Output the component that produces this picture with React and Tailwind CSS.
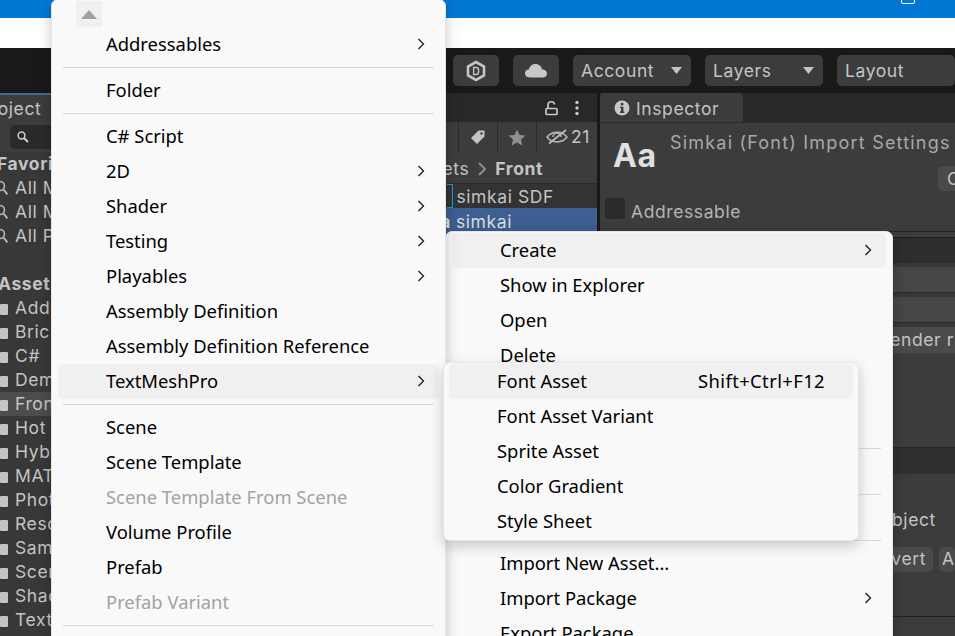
import React from "react";

const Chevron = () => (
  <svg width="8" height="12" viewBox="0 0 8 12" fill="none" stroke="#1a1a1a" strokeWidth="1.3" className="shrink-0">
    <path d="M1.5 1 L6.5 6 L1.5 11" />
  </svg>
);

const Item = ({ label, arrow, disabled, active, shortcut, pad = "pl-[48px]", chev = "pr-[14px]" }) => (
  <div className={`h-[35px] flex items-center justify-between rounded-[5px] pb-[1px] ${pad} ${chev} ${active ? "bg-[#f0f0f0]" : ""} ${disabled ? "text-[#a2a2a2]" : "text-black"}`}>
    <span className="truncate">{label}</span>
    {arrow && <Chevron />}
    {shortcut && <span className="tracking-[0.4px]">{shortcut}</span>}
  </div>
);

const Sep = () => (
  <div className="h-[11px] flex items-center px-[5px]">
    <div className="h-[1px] w-full bg-[#d9d9d9]" />
  </div>
);

const menuFont = "font-['Noto_Sans',sans-serif] text-[18.4px] leading-[24px] tracking-normal";

const Menu1 = () => (
  <div className={`absolute z-20 left-[51px] top-[-1px] w-[395px] bg-[#f9f9f9] border border-[#e6e6e6] rounded-[7px] pt-[1px] px-[6px] shadow-[0_4px_14px_rgba(0,0,0,0.22)] ${menuFont}`}>
    <div className="h-[26px] w-[26px] ml-[18px] bg-[#f0f0f0] flex items-center justify-center">
      <svg width="16" height="9" viewBox="0 0 16 9"><path d="M8 0 L16 9 L0 9 Z" fill="#a0a0a0" /></svg>
    </div>
    <Item label="Addressables" arrow />
    <Sep />
    <Item label="Folder" />
    <Sep />
    <Item label="C# Script" />
    <Item label="2D" arrow />
    <Item label="Shader" arrow />
    <Item label="Testing" arrow />
    <Item label="Playables" arrow />
    <Item label="Assembly Definition" />
    <Item label="Assembly Definition Reference" />
    <Item label="TextMeshPro" arrow active />
    <Sep />
    <Item label="Scene" />
    <Item label="Scene Template" />
    <Item label="Scene Template From Scene" disabled />
    <Item label="Volume Profile" />
    <Item label="Prefab" />
    <Item label="Prefab Variant" disabled />
    <Sep />
    <div className="h-[35px]" />
  </div>
);

const Menu2 = () => (
  <div className={`absolute z-10 left-[445px] top-[231px] w-[448px] bg-[#f9f9f9] border border-[#e6e6e6] rounded-[7px] pt-[1px] pl-[6px] pr-[6px] shadow-[0_4px_14px_rgba(0,0,0,0.22)] ${menuFont}`}>
    <Item label="Create" arrow active />
    <Item label="Show in Explorer" />
    <Item label="Open" />
    <Item label="Delete" />
    <div className="h-[70px]" />
    <Sep />
    <div className="h-[35px]" />
    <Sep />
    <div className="h-[35px]" />
    <Sep />
    <Item label="Import New Asset..." />
    <Item label="Import Package" arrow />
    <Item label="Export Package..." />
  </div>
);

const SubMenu = () => (
  <div className={`absolute z-30 left-[443px] top-[362px] w-[416px] bg-[#f9f9f9] border border-[#e6e6e6] rounded-[7px] p-[1px] px-[5px] shadow-[0_5px_14px_rgba(0,0,0,0.2)] ${menuFont}`}>
    <Item label="Font Asset" shortcut="Shift+Ctrl+F12" active chev="pr-[28px]" />
    <Item label="Font Asset Variant" />
    <Item label="Sprite Asset" />
    <Item label="Color Gradient" />
    <Item label="Style Sheet" />
  </div>
);

const Caret = () => (
  <svg width="11" height="7" viewBox="0 0 11 7" className="shrink-0"><path d="M0 0 H11 L5.5 7 Z" fill="#c4c4c4" /></svg>
);

const Toolbar = () => (
  <div className="h-[45px] bg-[#191919] flex items-center gap-[14px] pl-[453px] shrink-0">
    <div className="h-[31px] w-[46px] rounded-[5px] bg-[#3c3c3c] flex items-center justify-center">
      <svg width="20" height="22" viewBox="0 0 20 22" fill="none">
        <path d="M10 2 L18 6.5 V15.5 L10 20 L2 15.5 V6.5 Z" stroke="#c4c4c4" strokeWidth="2.6" />
        <path d="M7.6 7.5 H10.4 C13.4 7.5 13.4 14.5 10.4 14.5 H7.6 Z" stroke="#c4c4c4" strokeWidth="1.4" />
      </svg>
    </div>
    <div className="h-[31px] w-[46px] rounded-[5px] bg-[#3c3c3c] flex items-center justify-center">
      <svg width="22" height="15" viewBox="0 0 22 14"><path d="M5 14 C1.5 14 0 12 0 9.8 C0 7.6 1.6 6 3.8 6 C4.6 2.5 7.4 0.5 10.6 0.5 C14 0.5 16.4 2.8 17 5.8 C19.8 6 22 7.6 22 10 C22 12.4 20 14 17.5 14 Z" fill="#c8c8c8" /></svg>
    </div>
    <div className="h-[31px] w-[118px] rounded-[5px] bg-[#3c3c3c] flex items-center justify-between pl-[8px] pr-[9px]"><span className="pt-[2px]">Account</span><Caret /></div>
    <div className="h-[31px] w-[118px] rounded-[5px] bg-[#3c3c3c] flex items-center justify-between pl-[8px] pr-[9px]"><span className="pt-[2px]">Layers</span><Caret /></div>
    <div className="h-[31px] w-[118px] rounded-[5px] bg-[#3c3c3c] flex items-center pl-[8px]"><span className="pt-[2px]">Layout</span></div>
  </div>
);

const favs = ["All M", "All M", "All P"];
const folders = ["Addr", "Bric", "C#", "Dem", "Fron", "Hot", "Hyb", "MAT", "Phot", "Reso", "Sam", "Scen", "Shad", "Text"];

const Sidebar = () => (
  <div className="w-[240px] bg-[#383838] shrink-0 overflow-hidden">
    <div className="h-[24px] flex items-center font-bold -ml-[3px]">Favorites</div>
    {favs.map((f, i) => (
      <div key={i} className="h-[24px] flex items-center">
        <svg width="14" height="16" viewBox="0 0 14 16" fill="none" stroke="#b8b8b8" strokeWidth="1.6" className="shrink-0 -ml-[6px] mr-[7px]">
          <circle cx="6" cy="6" r="4.5" /><path d="M9.5 9.5 L13.5 14.5" strokeWidth="2" />
        </svg>
        <span>{f}</span>
      </div>
    ))}
    <div className="h-[24px]" />
    <div className="h-[24px] flex items-center font-bold -ml-[2px]">Assets</div>
    {folders.map((f) => (
      <div key={f} className={`h-[24px] flex items-center ${f === "Fron" ? "bg-[#4d4d4d]" : ""}`}>
        <div className="w-[8px] h-[11px] bg-[#c4c4c4] rounded-[1px] mt-[3px] mr-[7px] shrink-0" />
        <span>{f}</span>
      </div>
    ))}
  </div>
);

const Project = () => (
  <div className="w-[597px] shrink-0 flex flex-col">
    <div className="h-[29px] bg-[#282828] flex items-center shrink-0">
      <div className="h-full w-[200px] bg-[#3c3c3c] border-t-[2px] border-[#3f6aa0] flex items-center overflow-hidden">
        <span className="-ml-[21px] mt-[2px]">Project</span>
      </div>
      <div className="ml-auto flex items-center gap-[17px] pr-[18px]">
        <svg width="13" height="16" viewBox="0 0 13 16" fill="none" stroke="#c8c8c8" strokeWidth="1.7">
          <rect x="1" y="8.5" width="11" height="6" rx="1" /><path d="M3 8 V4.5 C3 0.8 9.5 0.8 9.5 4.5" />
        </svg>
        <svg width="4" height="16" viewBox="0 0 4 16" fill="#c8c8c8"><circle cx="2" cy="2.5" r="1.7" /><circle cx="2" cy="8" r="1.7" /><circle cx="2" cy="13.5" r="1.7" /></svg>
      </div>
    </div>
    <div className="h-[30px] bg-[#3c3c3c] flex items-center shrink-0">
      <div className="ml-[10px] h-[24px] w-[300px] bg-[#2a2a2a] rounded-[5px] flex items-center pl-[7px]">
        <svg width="12" height="12" viewBox="0 0 12 12" fill="none" stroke="#d0d0d0" strokeWidth="1.5"><circle cx="4.5" cy="4.5" r="3.4" /><path d="M7 7 L11 11" strokeWidth="2" /></svg>
      </div>
      <div className="ml-auto flex items-center h-[30px]">
        <div className="w-[39px] h-full border-l border-[#2a2a2a] flex items-center justify-center">
          <svg width="16" height="16" viewBox="0 0 16 16"><path d="M1 9 L8.5 1.5 L14.5 1.5 L14.5 7.5 L7 15 Z" fill="#c4c4c4" /><circle cx="11.5" cy="4.5" r="1.2" fill="#3c3c3c" /></svg>
        </div>
        <div className="w-[39px] h-full border-l border-[#2a2a2a] flex items-center justify-center">
          <svg width="18" height="17" viewBox="0 0 18 17"><path d="M9 0.5 L11.6 6 L17.5 6.6 L13 10.6 L14.3 16.5 L9 13.4 L3.7 16.5 L5 10.6 L0.5 6.6 L6.4 6 Z" fill="#8f8f8f" /></svg>
        </div>
        <div className="w-[61px] h-full border-l border-[#2a2a2a] flex items-center pl-[9px] gap-[3px]">
          <svg width="22" height="18" viewBox="0 0 22 18" fill="none" stroke="#b8b8b8" strokeWidth="1.5" className="shrink-0">
            <path d="M1 9 C6 2.5 16 2.5 21 9 C16 15.5 6 15.5 1 9 Z" /><path d="M7 9 A4 4 0 0 1 15 9" /><path d="M3 15.5 L20 2" strokeWidth="1.8" />
          </svg>
          <span>21</span>
        </div>
      </div>
    </div>
    <div className="flex flex-1 min-h-0">
      <Sidebar />
      <div className="flex-1 flex flex-col bg-[#333333] min-w-0">
        <div className="h-[32px] bg-[#3c3c3c] border-b border-[#2a2a2a] flex items-center justify-end shrink-0 pr-[54px] gap-[9px] pt-[3px]">
          <span>Assets</span>
          <svg width="8" height="14" viewBox="0 0 8 14" fill="none" stroke="#8c8c8c" strokeWidth="2"><path d="M1 1 L7 7 L1 13" /></svg>
          <span className="font-bold">Front</span>
        </div>
        <div className="h-[24px] flex items-center justify-end pr-[43px] shrink-0 gap-[3px]">
          <div className="w-[6px] h-[24px] border-y border-r border-[#1b9ad6]" />
          <span className="pt-[3px]">simkai SDF</span>
        </div>
        <div className="h-[26px] bg-[#3e5f91] flex items-center justify-end pr-[85px] shrink-0 text-[#dcdcdc] gap-[5px] pt-[3px]">
          <span className="font-bold">a</span><span>simkai</span>
        </div>
        <div className="flex-1" />
      </div>
    </div>
  </div>
);

const Inspector = () => (
  <div className="flex-1 ml-[3px] flex flex-col min-w-0">
    <div className="h-[29px] bg-[#282828] shrink-0">
      <div className="h-full w-[143px] bg-[#3c3c3c] rounded-t-[4px] flex items-center pl-[14px] gap-[6px]">
        <svg width="16" height="16" viewBox="0 0 16 16"><circle cx="8" cy="8" r="7.5" fill="#c8c8c8" /><rect x="6.8" y="2.8" width="2.6" height="2.6" rx="1" fill="#3c3c3c" /><path d="M6 6.7 H9.4 V11.6 H10.4 V13 H6 V11.6 H7 V8 H6 Z" fill="#3c3c3c" /></svg>
        <span className="pt-[3px]">Inspector</span>
      </div>
    </div>
    <div className="h-[109px] bg-[#3c3c3c] border-t border-[#2a2a2a] shrink-0 relative">
      <div className="flex">
        <div className="w-[70px] pl-[13px] pt-[13px] text-[32px] leading-[40px] font-bold text-[#e0e0e0]">Aa</div>
        <div className="pt-[6px] text-[18px] tracking-[1.2px] text-[#a8a8a8] whitespace-nowrap">Simkai (Font) Import Settings</div>
      </div>
      <div className="absolute left-[338px] top-[43px] h-[25px] w-[40px] rounded-[5px] bg-[#4a4a4a] pl-[9px] leading-[25px]">O</div>
      <div className="flex items-center mt-[16px] pl-[5px] gap-[6px]">
        <div className="w-[20px] h-[21px] rounded-[3px] bg-[#2a2a2a]" />
        <span className="text-[#b4b4b4] pt-[7px]">Addressable</span>
      </div>
    </div>
    <div className="h-[6px] bg-[#3c3c3c] shrink-0 border-t border-[#222222]" />
    <div className="h-[26px] bg-[#2d2d2d] shrink-0 border-t border-[#1f1f1f]" />
    <div className="h-[4px] bg-[#383838] shrink-0" />
    <div className="h-[26px] bg-[#464646] shrink-0 border-b border-[#2a2a2a]" />
    <div className="h-[4px] bg-[#383838] shrink-0" />
    <div className="h-[26px] bg-[#464646] shrink-0 border-b border-[#2a2a2a]" />
    <div className="h-[4px] bg-[#383838] shrink-0" />
    <div className="h-[26px] bg-[#4a4a4a] shrink-0 flex items-center justify-end overflow-hidden whitespace-nowrap pr-[1px]">Extender r</div>
    <div className="h-[94px] bg-[#3c3c3c] shrink-0" />
    <div className="h-[27px] bg-[#303030] shrink-0 border-t border-[#262626]" />
    <div className="h-[73px] bg-[#3c3c3c] shrink-0 flex items-center pt-[20px] whitespace-nowrap pl-[278px]">
      <span>Object</span>
    </div>
    <div className="h-[69px] bg-[#3c3c3c] shrink-0 flex items-start gap-[6px] whitespace-nowrap">
      <div className="ml-[270px] w-[63px] h-[25px] rounded-[5px] bg-[#4a4a4a] flex items-center justify-end pr-[7px]">Revert</div>
      <div className="w-[40px] h-[25px] rounded-[5px] bg-[#4a4a4a] pl-[3px] flex items-center">A</div>
    </div>
    <div className="h-[1px] bg-[#1f1f1f] shrink-0" />
    <div className="flex-1 bg-[#3c3c3c]" />
  </div>
);

export default function App() {
  return (
    <div className="relative w-[955px] h-[636px] overflow-hidden bg-[#191919] flex flex-col font-['Inter',sans-serif] text-[17.5px] tracking-[0.6px] text-[#c4c4c4]">
      <div className="h-[18px] bg-[#0078d4] shrink-0 relative">
        <div className="absolute left-[901px] top-[-5px] w-[14px] h-[9px] border border-white rounded-[2px]" />
      </div>
      <div className="h-[30px] bg-white shrink-0" />
      <Toolbar />
      <div className="flex flex-1 min-h-0">
        <Project />
        <Inspector />
      </div>
      <Menu2 />
      <Menu1 />
      <SubMenu />
    </div>
  );
}
